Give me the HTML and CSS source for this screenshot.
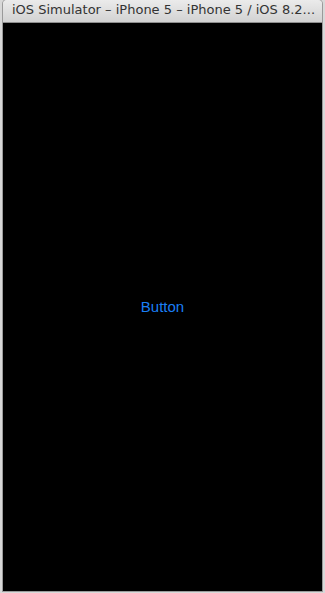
FILE: index.html
```html
<!DOCTYPE html>
<html lang="en">
<head>
    <meta charset="UTF-8">
    <meta name="viewport" content="width=device-width, initial-scale=1.0">
    <title>iOS Simulator</title>
    <link rel="stylesheet" href="styles.css">
</head>
<body>
    <div class="window">
        <div class="titlebar">iOS Simulator – iPhone 5 – iPhone 5 / iOS 8.2...</div>
        <div class="screen">
            <button class="ios-button" type="button">Button</button>
        </div>
    </div>
</body>
</html>
```
FILE: styles.css
```css
body {
    margin: 0;
    padding: 0;
    width: 325px;
    height: 593px;
    background-color: #d8d8d8;
    overflow: hidden;
}

.window {
    margin: 0 0 0 3px;
    width: 319px;
    height: 591px;
    display: flex;
    flex-direction: column;
    border-radius: 4px 4px 0 0;
    overflow: hidden;
    box-shadow: 0 0 0 1px #9a9a9a;
}

.titlebar {
    height: 23px;
    flex-shrink: 0;
    background: linear-gradient(#ebebeb, #d2d2d2);
    border-bottom: 1px solid #8e8e8e;
    box-sizing: border-box;
    padding: 2px 0 0 9px;
    font-family: "DejaVu Sans", sans-serif;
    font-size: 13px;
    color: #333333;
    white-space: nowrap;
    letter-spacing: 0;
}

.screen {
    flex: 1;
    background-color: #000000;
    display: flex;
    justify-content: center;
    align-items: center;
    padding-bottom: 1px;
}

.ios-button {
    background: none;
    border: none;
    padding: 0;
    font-family: "Liberation Sans", Arial, sans-serif;
    font-size: 15px;
    color: #1a7ff5;
}
```
